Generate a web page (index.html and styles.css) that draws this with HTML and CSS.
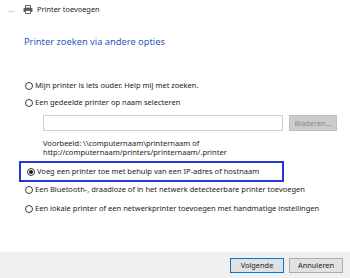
FILE: index.html
```html
<!DOCTYPE html>
<html lang="nl">
<head>
<meta charset="utf-8">
<title>Printer toevoegen</title>
<link rel="stylesheet" href="styles.css">
</head>
<body>
<div class="window">
  <div class="header">
    <span class="back">&#8592;</span>
    <svg class="printer-icon" width="10" height="9" viewBox="0 0 10 9">
      <rect x="2.5" y="0.5" width="5" height="2.5" fill="#fff" stroke="#6a6a6a" stroke-width="1"/>
      <rect x="0.5" y="3" width="9" height="4" rx="0.8" fill="#5a5a5a"/>
      <rect x="2.5" y="5.5" width="5" height="3" fill="#fff" stroke="#6a6a6a" stroke-width="1"/>
    </svg>
    <span class="header-title">Printer toevoegen</span>
  </div>
  <div class="content">
    <h1 class="main-title">Printer zoeken via andere opties</h1>
    <div class="options">
      <label class="option opt1"><span class="radio"></span>Mijn printer is iets ouder. Help mij met zoeken.</label>
      <label class="option opt2"><span class="radio"></span>Een gedeelde printer op naam selecteren</label>
      <div class="share-row">
        <div class="input"></div>
        <div class="btn btn-disabled">Bladeren...</div>
      </div>
      <div class="example">Voorbeeld: \\computernaam\printernaam of<br>http://computernaam/printers/printernaam/.printer</div>
      <label class="option opt3 highlight"><span class="radio checked"></span>Voeg een printer toe met behulp van een IP-adres of hostnaam</label>
      <label class="option opt4"><span class="radio"></span>Een Bluetooth-, draadloze of in het netwerk detecteerbare printer toevoegen</label>
      <label class="option opt5"><span class="radio"></span>Een lokale printer of een netwerkprinter toevoegen met handmatige instellingen</label>
    </div>
  </div>
  <div class="footer">
    <div class="btn btn-default">Volgende</div>
    <div class="btn">Annuleren</div>
  </div>
</div>
</body>
</html>
```

FILE: styles.css
```css
html, body {
  margin: 0;
  padding: 0;
  background: #ffffff;
}
.window {
  width: 350px;
  height: 278px;
  display: flex;
  flex-direction: column;
  font-family: "Noto Sans", "Open Sans", sans-serif;
  font-size: 7.5px;
  color: #1b1b1b;
  overflow: hidden;
}
.header {
  height: 18px;
  display: flex;
  align-items: center;
  padding-left: 7px;
}
.back {
  color: #b0b0b0;
  font-size: 9px;
  width: 16px;
  line-height: 1;
}
.printer-icon {
  margin-right: 4px;
}
.header-title {
  font-size: 7.4px;
  color: #222;
}
.content {
  flex: 1;
  padding-left: 24px;
}
.main-title {
  margin: 18px 0 0 0;
  font-size: 9.3px;
  font-weight: normal;
  line-height: 12px;
  color: #2a58b8;
}
.options {
  margin-top: 29px;
  display: flex;
  flex-direction: column;
}
.option {
  display: flex;
  align-items: center;
  height: 17px;
  line-height: 17px;
}
.radio {
  width: 6px;
  height: 6px;
  border: 1px solid #3a3a3a;
  border-radius: 50%;
  margin-left: 1px;
  margin-right: 2px;
  display: flex;
  align-items: center;
  justify-content: center;
  background: #fff;
}
.radio.checked::after {
  content: "";
  width: 4px;
  height: 4px;
  border-radius: 50%;
  background: #1b1b1b;
}
.share-row {
  display: flex;
  margin-left: 19px;
  margin-top: 4px;
  gap: 6px;
}
.input {
  width: 238px;
  height: 14px;
  border: 1px solid #cfcfcf;
  background: #fff;
}
.btn {
  height: 13px;
  padding: 0;
  border: 1px solid #adadad;
  background: #e1e1e1;
  display: flex;
  align-items: center;
  justify-content: center;
  font-size: 7.4px;
  color: #1b1b1b;
  box-sizing: content-box;
}
.btn-disabled {
  width: 46px;
  height: 14px;
  background: #cccccc;
  border-color: #bfbfbf;
  color: #8a8a8a;
}
.example {
  margin-left: 19px;
  margin-top: 8px;
  line-height: 9px;
}
.opt3 {
  margin-top: 4px;
}
.highlight {
  margin-left: -5px;
  padding-left: 5px;
  width: 256px;
  height: 17px;
  border: 2px solid #2536d4;
}
.opt4 {
  margin-top: -1px;
}
.opt5 {
  margin-top: 2px;
}
.footer {
  height: 26px;
  background: #f0f0f0;
  display: flex;
  justify-content: flex-end;
  align-items: center;
  gap: 5px;
  padding-right: 7px;
}
.footer .btn {
  width: 52px;
}
.btn-default {
  border-color: #0078d7;
}
```
